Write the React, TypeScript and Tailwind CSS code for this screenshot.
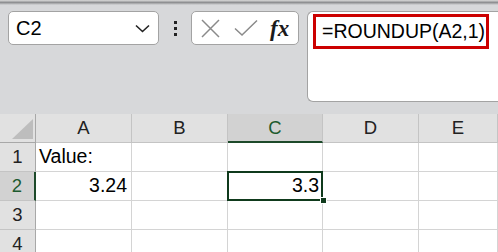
import React from "react";

const cols = [
  { w: "w-[96px]", label: "A" },
  { w: "w-[96px]", label: "B" },
  { w: "w-[95px]", label: "C" },
  { w: "w-[96px]", label: "D" },
  { w: "flex-1", label: "E" },
];

function Cell({
  w,
  children,
  align = "left",
}: {
  w: string;
  children?: React.ReactNode;
  align?: "left" | "right";
}) {
  return (
    <div
      className={`${w} h-full border-r border-b border-[#d4d4d4] flex items-center ${
        align === "right" ? "justify-end pr-[4px]" : "justify-start pl-[3px]"
      } text-[19.5px] text-black`}
    >
      {children}
    </div>
  );
}

export default function App() {
  const font = { fontFamily: '"Liberation Sans", Arial, sans-serif' };
  return (
    <div
      className="w-[498px] h-[252px] overflow-hidden bg-[#d7d8da] flex flex-col relative"
      style={font}
    >
      {/* top shadow */}
      <div className="h-[5px] w-full shrink-0 bg-gradient-to-b from-[#dcdcdc] via-[#8f9092] to-[#d7d8da]" />

      {/* toolbar */}
      <div className="flex items-start pl-[8px] pt-[6px] h-[103px] shrink-0">
        {/* name box */}
        <div className="w-[151px] h-[34px] bg-white border border-[#a3a3a3] rounded-[5px] flex items-center pl-[7px] pr-[8px]">
          <span className="text-[20px] text-black flex-1 leading-none">C2</span>
          <svg width="15" height="9" viewBox="0 0 15 9">
            <path d="M1 1.5 L7.5 7.5 L14 1.5" fill="none" stroke="#222" strokeWidth="1.6" />
          </svg>
        </div>
        {/* dots */}
        <div className="w-[32px] h-[34px] flex flex-col items-center justify-center gap-[3px]">
          <div className="w-[3px] h-[3px] bg-[#222]" />
          <div className="w-[3px] h-[3px] bg-[#222]" />
          <div className="w-[3px] h-[3px] bg-[#222]" />
        </div>
        {/* fx box */}
        <div className="w-[108px] h-[34px] bg-white border border-[#a3a3a3] rounded-[5px] flex items-center pl-[9px]">
          <svg width="19" height="19" viewBox="0 0 19 19">
            <path d="M1 1 L18 18 M18 1 L1 18" stroke="#8a8a8a" strokeWidth="1.5" fill="none" />
          </svg>
          <svg width="26" height="18" viewBox="0 0 26 18" className="ml-[13px]">
            <path d="M2 9.5 L9 16 L24 1.5" stroke="#8a8a8a" strokeWidth="1.5" fill="none" />
          </svg>
          <span
            className="ml-[11px] text-[23px] italic font-bold text-[#1a1a1a] leading-none"
            style={{ fontFamily: '"Liberation Serif", "Times New Roman", serif' }}
          >
            fx
          </span>
        </div>
        {/* formula bar */}
        <div className="ml-[8px] flex-1 h-[91px] bg-white border border-r-0 border-[#a3a3a3] rounded-l-[6px] pt-[2px] pl-[5px]">
          <div className="w-[176px] h-[35px] border-[3px] border-[#cc0000] flex items-center pl-[6px]">
            <span className="text-[19.5px] text-black leading-none">=ROUNDUP(A2,1)</span>
          </div>
        </div>
      </div>

      {/* grid */}
      <div className="flex-1 flex flex-col mt-[6px] bg-white">
        {/* header row */}
        <div className="flex h-[29px] shrink-0 bg-[#e1e1e1]">
          <div className="w-[36px] h-full border-r border-b border-[#a8a8a8] relative">
            <svg width="21" height="20" viewBox="0 0 21 20" className="absolute left-[12px] top-[5px]">
              <polygon points="21,0 21,20 0,20" fill="#bdbdbd" />
            </svg>
          </div>
          {cols.map((c) => (
            <div
              key={c.label}
              className={`${c.w} h-full flex items-center justify-center text-[18.5px] ${
                c.label === "C"
                  ? "bg-[#d2d2d2] border-b-2 border-b-[#1d4a2a] text-[#1d5a2e] border-r border-r-[#c4c4c4]"
                  : "border-r border-b border-[#c4c4c4] text-[#222]"
              }`}
            >
              {c.label}
            </div>
          ))}
        </div>
        {[1, 2, 3, 4].map((r) => (
          <div key={r} className="flex h-[29px] shrink-0">
            <div
              className={`w-[36px] h-full flex items-center justify-center text-[18.5px] border-b border-[#c4c4c4] ${
                r === 2
                  ? "bg-[#d2d2d2] text-[#1d5a2e] border-r-2 border-r-[#1d4a2a]"
                  : "bg-[#e1e1e1] text-[#222] border-r border-r-[#a8a8a8]"
              }`}
            >
              {r}
            </div>
            <Cell w="w-[96px]" align={r === 2 ? "right" : "left"}>
              {r === 1 ? "Value:" : r === 2 ? "3.24" : null}
            </Cell>
            <Cell w="w-[96px]" />
            {r === 2 ? (
              <div className="w-[95px] h-full relative border-b border-[#d4d4d4]">
                <div className="absolute left-[-1px] top-[-1px] right-0 bottom-[-1px] border-2 border-[#0f3a1c] flex items-center justify-end pr-[2px] text-[19.5px] text-black">
                  3.3
                </div>
                <div className="absolute right-[-4px] bottom-[-4px] w-[7px] h-[7px] bg-[#0f3a1c] border border-white" />
              </div>
            ) : (
              <Cell w="w-[95px]" />
            )}
            <Cell w="w-[96px]" />
            <Cell w="flex-1" />
          </div>
        ))}
      </div>
    </div>
  );
}
